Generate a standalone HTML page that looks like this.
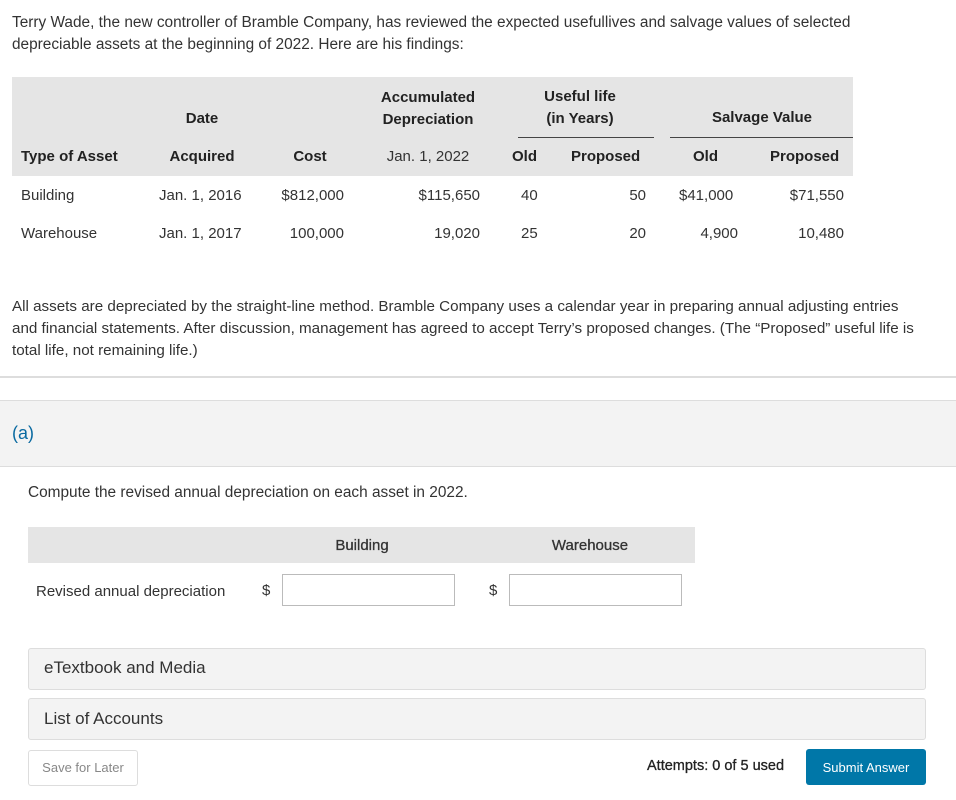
<!DOCTYPE html>
<html><head><style>
body{margin:0;width:956px;height:800px;position:relative;font-family:"Liberation Sans",sans-serif;color:#333;background:#fff;overflow:hidden}
.a{position:absolute;white-space:nowrap;font-size:15px}
.b{font-weight:bold;color:#222}
.r{text-align:right}
.c{text-align:center}
p{margin:0}
</style></head><body>
<div class="a" style="left:12px;top:12px;font-size:15.4px;line-height:22px">Terry Wade, the new controller of Bramble Company, has reviewed the expected usefullives and salvage values of selected<br>depreciable assets at the beginning of 2022. Here are his findings:</div>

<div style="position:absolute;left:12px;top:77px;width:841px;height:99px;background:#e5e5e5"></div>
<div style="position:absolute;left:518px;top:137px;width:136px;height:1px;background:#444"></div>
<div style="position:absolute;left:670px;top:137px;width:183px;height:1px;background:#444"></div>

<div class="a b c" style="left:150px;width:104px;top:110px">Date</div>
<div class="a b c" style="left:360px;width:136px;top:87px;line-height:22px">Accumulated<br>Depreciation</div>
<div class="a b c" style="left:520px;width:120px;top:86px;line-height:22px">Useful life<br>(in Years)</div>
<div class="a b c" style="left:680px;width:164px;top:109px">Salvage Value</div>

<div class="a b" style="left:21px;top:148px">Type of Asset</div>
<div class="a b c" style="left:150px;width:104px;top:148px">Acquired</div>
<div class="a b c" style="left:270px;width:80px;top:148px">Cost</div>
<div class="a c" style="left:370px;width:116px;top:148px">Jan. 1, 2022</div>
<div class="a b" style="left:512px;top:148px">Old</div>
<div class="a b" style="left:571px;top:148px">Proposed</div>
<div class="a b" style="left:693px;top:148px">Old</div>
<div class="a b" style="left:770px;top:148px">Proposed</div>

<div class="a" style="left:21px;top:187px">Building</div>
<div class="a" style="left:159px;top:187px">Jan. 1, 2016</div>
<div class="a r" style="left:260px;width:84px;top:187px">$812,000</div>
<div class="a r" style="left:380px;width:100px;top:187px">$115,650</div>
<div class="a" style="left:521px;top:187px">40</div>
<div class="a r" style="left:600px;width:46px;top:187px">50</div>
<div class="a" style="left:679px;top:187px">$41,000</div>
<div class="a r" style="left:760px;width:84px;top:187px">$71,550</div>

<div class="a" style="left:21px;top:225px">Warehouse</div>
<div class="a" style="left:159px;top:225px">Jan. 1, 2017</div>
<div class="a r" style="left:260px;width:84px;top:225px">100,000</div>
<div class="a r" style="left:380px;width:100px;top:225px">19,020</div>
<div class="a" style="left:521px;top:225px">25</div>
<div class="a r" style="left:600px;width:46px;top:225px">20</div>
<div class="a r" style="left:660px;width:78px;top:225px">4,900</div>
<div class="a r" style="left:760px;width:84px;top:225px">10,480</div>

<div class="a" style="left:12px;top:296px;line-height:22px;font-size:15.2px">All assets are depreciated by the straight-line method. Bramble Company uses a calendar year in preparing annual adjusting entries<br>and financial statements. After discussion, management has agreed to accept Terry’s proposed changes. (The “Proposed” useful life is<br>total life, not remaining life.)</div>

<div style="position:absolute;left:0;top:376px;width:956px;height:2px;background:#ddd"></div>
<div style="position:absolute;left:0;top:400px;width:956px;height:65px;background:#f3f3f3;border-top:1px solid #ddd;border-bottom:1px solid #ddd"></div>
<div class="a" style="left:12px;top:423px;font-size:18px;color:#0a6aa1">(a)</div>

<div class="a" style="left:28px;top:484px;font-size:15.4px">Compute the revised annual depreciation on each asset in 2022.</div>

<div style="position:absolute;left:28px;top:527px;width:667px;height:36px;background:#e5e5e5"></div>
<div class="a c" style="left:282px;width:160px;top:537px;-webkit-text-stroke:.3px #333">Building</div>
<div class="a c" style="left:510px;width:160px;top:537px;-webkit-text-stroke:.3px #333">Warehouse</div>

<div class="a" style="left:36px;top:583px">Revised annual depreciation</div>
<div class="a" style="left:262px;top:582px">$</div>
<div style="position:absolute;left:282px;top:574px;width:171px;height:30px;border:1px solid #bbb;background:#fff"></div>
<div class="a" style="left:489px;top:582px">$</div>
<div style="position:absolute;left:509px;top:574px;width:171px;height:30px;border:1px solid #bbb;background:#fff"></div>

<div style="position:absolute;left:28px;top:648px;width:896px;height:40px;background:#f3f3f3;border:1px solid #ddd;border-radius:3px"></div>
<div class="a" style="left:44px;top:658px;font-size:17px">eTextbook and Media</div>
<div style="position:absolute;left:28px;top:698px;width:896px;height:40px;background:#f3f3f3;border:1px solid #ddd;border-radius:3px"></div>
<div class="a" style="left:44px;top:709px;font-size:17px">List of Accounts</div>

<div style="position:absolute;left:28px;top:750px;width:108px;height:34px;border:1px solid #ddd;border-radius:3px;background:#fff"></div>
<div class="a c" style="left:28px;width:110px;top:760px;font-size:13px;color:#888">Save for Later</div>
<div class="a" style="left:647px;top:758px;font-size:14.5px;color:#222;-webkit-text-stroke:.3px #222">Attempts: 0 of 5 used</div>
<div style="position:absolute;left:806px;top:749px;width:120px;height:36px;background:#0077a8;border-radius:3px"></div>
<div class="a c" style="left:806px;width:120px;top:760px;font-size:13px;color:#fff">Submit Answer</div>
</body></html>
